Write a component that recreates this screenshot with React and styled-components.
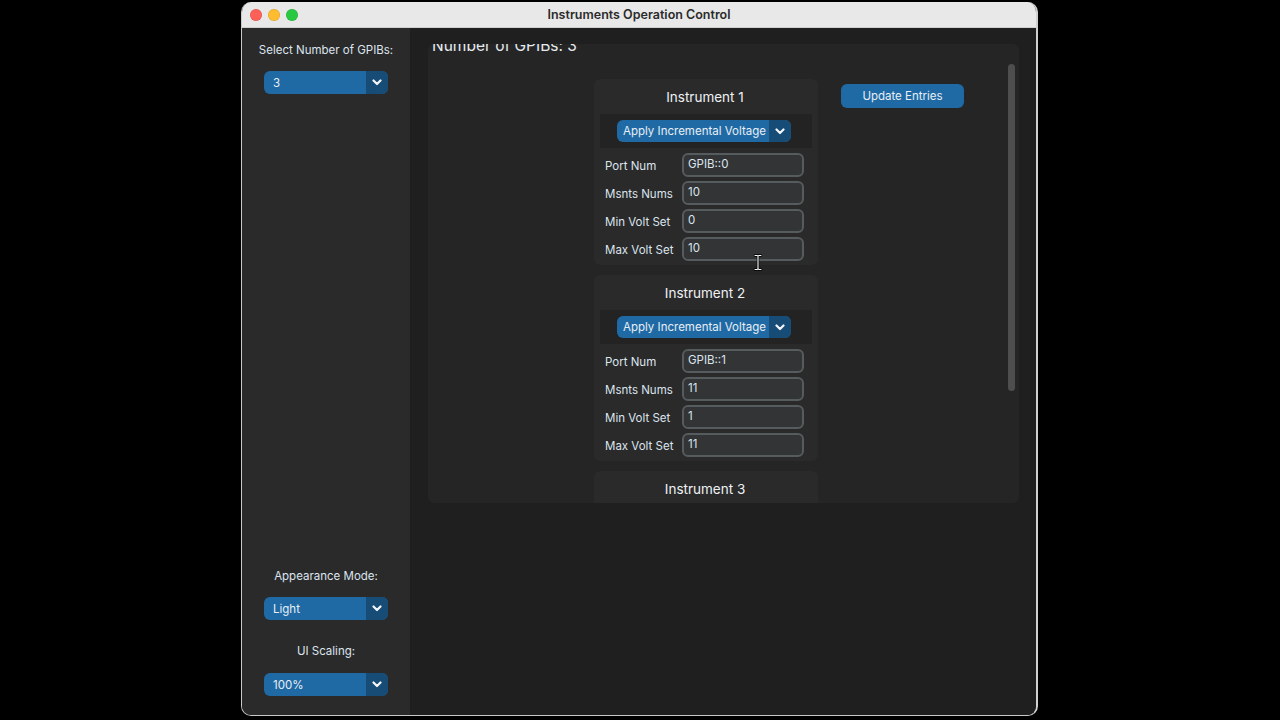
import React from 'react';
import styled, { createGlobalStyle } from 'styled-components';

const GlobalStyle = createGlobalStyle`
  html, body {
    margin: 0;
    padding: 0;
    background: #000;
    width: 1280px;
    height: 720px;
    overflow: hidden;
  }
  body {
    font-family: "Inter", "Liberation Sans", sans-serif;
    color: #dce4ee;
  }
`

const Desktop = styled.div`
  width: 1280px;
  height: 720px;
  position: relative;
`

const Window = styled.div`
  position: absolute;
  left: 241px;
  top: 2px;
  width: 797px;
  height: 714px;
  display: flex;
  flex-direction: column;
  border: 1px solid #c9c9c9;
  border-right: 2px solid #d0d0d0;
  border-top: none;
  border-radius: 10px;
  overflow: hidden;
  background: #1f1f1f;
  box-sizing: border-box;
`

const TitleBar = styled.div`
  height: 25px;
  flex: none;
  background: #e8e8e8;
  border-bottom: 1px solid #cfcfcf;
  display: flex;
  align-items: center;
  position: relative;
  padding-left: 8px;
  gap: 6px;
`

const Light = styled.span`
  width: 12px;
  height: 12px;
  border-radius: 50%;
  background: ${({ color }) => color};
  box-shadow: inset 0 0 0 0.5px rgba(0, 0, 0, 0.15);
`

const TitleText = styled.div`
  position: absolute;
  left: 0;
  right: 0;
  text-align: center;
  font-size: 12.5px;
  font-weight: 600;
  color: #2b2b2b;
`

const Body = styled.div`
  flex: 1;
  display: flex;
  min-height: 0;
`

const Sidebar = styled.div`
  width: 168px;
  flex: none;
  background: #2a2a2a;
  display: flex;
  flex-direction: column;
  align-items: center;
  padding: 15px 0 19px;
  box-sizing: border-box;
`

const SideLabel = styled.div`
  font-size: 11.5px;
  line-height: 14px;
  text-align: center;
  margin-bottom: ${({ $gap }) => $gap}px;
  margin-top: ${({ $top }) => $top || 0}px;
`

const Spacer = styled.div`
  flex: 1;
`

const Menu = styled.div`
  width: ${({ $w }) => $w}px;
  height: ${({ $h }) => $h || 23}px;
  border-radius: 6px;
  background: #1f6aa5;
  display: flex;
  overflow: hidden;
  flex: none;
`

const MenuText = styled.div`
  flex: 1;
  font-size: 11.5px;
  display: flex;
  align-items: center;
  justify-content: ${({ $center }) => ($center ? 'center' : 'flex-start')};
  padding-left: ${({ $center }) => ($center ? 3 : 9)}px;
  color: #e8eef4;
  white-space: nowrap;
`

const MenuArrow = styled.div`
  width: 22px;
  flex: none;
  background: #174c77;
  display: flex;
  align-items: center;
  justify-content: center;
`

const Chevron = () => (
  <svg width="10" height="7" viewBox="0 0 10 7">
    <polyline points="1.5,1.5 5,5 8.5,1.5" fill="none" stroke="#f2f5f8" strokeWidth="2.2" strokeLinecap="round" strokeLinejoin="round" />
  </svg>
);

const OptionMenu = ({ value, width, height, center }) => (
  <Menu $w={width} $h={height}>
    <MenuText $center={center}>{value}</MenuText>
    <MenuArrow><Chevron /></MenuArrow>
  </Menu>
);

const Main = styled.div`
  flex: 1;
  background: #1f1f1f;
  padding: 16px 17px 0 18px;
  box-sizing: border-box;
`

const ScrollFrame = styled.div`
  height: 459px;
  background: #252525;
  border-radius: 6px;
  display: flex;
  overflow: hidden;
`

const ScrollBody = styled.div`
  flex: 1;
  overflow: hidden;
`

const ScrollInner = styled.div`
  margin-top: -8px;
  padding-left: 4px;
`

const Heading = styled.div`
  font-size: 15.5px;
  line-height: 20px;
  color: #e6ebf0;
`

const Columns = styled.div`
  display: flex;
  align-items: flex-start;
  gap: 23px;
  margin-top: 23px;
  padding-left: 162px;
`

const CardList = styled.div`
  width: 224px;
  display: flex;
  flex-direction: column;
  gap: 10px;
`

const Card = styled.div`
  background: #2a2a2a;
  border-radius: 6px;
  padding: 0 4px 4px;
`

const CardTitle = styled.div`
  height: 35px;
  line-height: 36px;
  text-align: center;
  font-size: 13.5px;
  color: #eef1f4;
  padding-right: 2px;
`

const MenuBand = styled.div`
  background: #232323;
  height: 34px;
  display: flex;
  align-items: center;
  justify-content: center;
  margin: 0 2px;
  padding-right: 4px;
`

const Fields = styled.div`
  display: flex;
  flex-direction: column;
  gap: 4px;
  margin-top: 5px;
`

const FieldRow = styled.div`
  display: flex;
  align-items: center;
  padding-left: 7px;
`

const FieldLabel = styled.div`
  width: 77px;
  font-size: 11.5px;
  padding-top: 2px;
`

const Entry = styled.div`
  width: 122px;
  height: 24px;
  box-sizing: border-box;
  border: 2px solid #565b5e;
  border-radius: 6px;
  background: #323436;
  font-size: 11.5px;
  padding: 0 0 2px 4px;
  display: flex;
  align-items: center;
`

const UpdateButton = styled.button`
  margin-top: 5px;
  width: 123px;
  height: 24px;
  border: none;
  border-radius: 6px;
  background: #1f6aa5;
  color: #e8eef4;
  font-family: inherit;
  font-size: 11.5px;
  padding: 0;
`

const ScrollTrack = styled.div`
  width: 18px;
  flex: none;
  padding: 20px 4px 0 7px;
  box-sizing: border-box;
`

const ScrollThumb = styled.div`
  height: 327px;
  border-radius: 4px;
  background: #4e4e4e;
`

const Cursor = styled.svg`
  position: absolute;
  left: 753px;
  top: 254px;
`

const instruments = [
  { name: 'Instrument 1', port: 'GPIB::0', msnts: '10', min: '0', max: '10' },
  { name: 'Instrument 2', port: 'GPIB::1', msnts: '11', min: '1', max: '11' },
  { name: 'Instrument 3', port: 'GPIB::2', msnts: '12', min: '2', max: '12' },
];

const InstrumentCard = ({ inst }) => (
  <Card>
    <CardTitle>{inst.name}</CardTitle>
    <MenuBand>
      <OptionMenu value="Apply Incremental Voltage" width={174} height={22} center />
    </MenuBand>
    <Fields>
      <FieldRow><FieldLabel>Port Num</FieldLabel><Entry>{inst.port}</Entry></FieldRow>
      <FieldRow><FieldLabel>Msnts Nums</FieldLabel><Entry>{inst.msnts}</Entry></FieldRow>
      <FieldRow><FieldLabel>Min Volt Set</FieldLabel><Entry>{inst.min}</Entry></FieldRow>
      <FieldRow><FieldLabel>Max Volt Set</FieldLabel><Entry>{inst.max}</Entry></FieldRow>
    </Fields>
  </Card>
);

const App = () => (
  <Desktop>
    <GlobalStyle />
    <Window>
      <TitleBar>
        <Light color="#fe5f57" />
        <Light color="#febc2e" />
        <Light color="#28c840" />
        <TitleText>Instruments Operation Control</TitleText>
      </TitleBar>
      <Body>
        <Sidebar>
          <SideLabel $gap={14}>Select Number of GPIBs:</SideLabel>
          <OptionMenu value="3" width={124} />
          <Spacer />
          <SideLabel $gap={14}>Appearance Mode:</SideLabel>
          <OptionMenu value="Light" width={124} />
          <SideLabel $top={24} $gap={15}>UI Scaling:</SideLabel>
          <OptionMenu value="100%" width={124} />
        </Sidebar>
        <Main>
          <ScrollFrame>
            <ScrollBody>
              <ScrollInner>
                <Heading>Number of GPIBs: 3</Heading>
                <Columns>
                  <CardList>
                    {instruments.map((inst) => (
                      <InstrumentCard key={inst.name} inst={inst} />
                    ))}
                  </CardList>
                  <UpdateButton>Update Entries</UpdateButton>
                </Columns>
              </ScrollInner>
            </ScrollBody>
            <ScrollTrack>
              <ScrollThumb />
            </ScrollTrack>
          </ScrollFrame>
        </Main>
      </Body>
    </Window>
    <Cursor width="10" height="17" viewBox="0 0 10 17">
      <path d="M2 1.5h2.2L5 2.3l.8-.8H8M5 2.3v12.4M2 15.5h2.2l.8-.8.8.8H8" fill="none" stroke="#000" strokeWidth="2.6" strokeLinecap="round" />
      <path d="M2 1.5h2.2L5 2.3l.8-.8H8M5 2.3v12.4M2 15.5h2.2l.8-.8.8.8H8" fill="none" stroke="#fff" strokeWidth="1.1" strokeLinecap="round" />
    </Cursor>
  </Desktop>
);

export default App;
